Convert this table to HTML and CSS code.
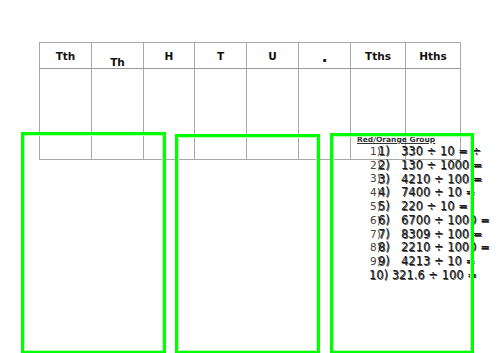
FILE: index.html
```html
<!DOCTYPE html>
<html>
<head>
<meta charset="utf-8">
<link rel="stylesheet" href="styles.css">
</head>
<body>
<table class="pv">
  <tr class="head">
    <th class="c1">Tth</th>
    <th class="c2 low">Th</th>
    <th class="c3">H</th>
    <th class="c4">T</th>
    <th class="c5">U</th>
    <th class="c6 dot">.</th>
    <th class="c7">Tths</th>
    <th class="c8">Hths</th>
  </tr>
  <tr class="body">
    <td></td><td></td><td></td><td></td><td></td><td></td><td></td><td></td>
  </tr>
</table>

<div class="notes">
  <div class="title">Red/Orange Group</div>
  <div class="row"><span class="n">1)</span><span class="m">1)</span><span class="e">330 ÷ 10 = ÷</span></div>
  <div class="row"><span class="n">2)</span><span class="m">2)</span><span class="e">130 ÷ 1000 =</span></div>
  <div class="row"><span class="n">3)</span><span class="m">3)</span><span class="e">4210 ÷ 100 =</span></div>
  <div class="row"><span class="n">4)</span><span class="m">4)</span><span class="e">7400 ÷ 10 =</span></div>
  <div class="row"><span class="n">5)</span><span class="m">5)</span><span class="e">220 ÷ 10 =</span></div>
  <div class="row"><span class="n">6)</span><span class="m">6)</span><span class="e">6700 ÷ 1000 =</span></div>
  <div class="row"><span class="n">7)</span><span class="m">7)</span><span class="e">8309 ÷ 100 =</span></div>
  <div class="row"><span class="n">8)</span><span class="m">8)</span><span class="e">2210 ÷ 1000 =</span></div>
  <div class="row"><span class="n">9)</span><span class="m">9)</span><span class="e">4213 ÷ 10 =</span></div>
  <div class="row last"><span class="e">10) 321.6 ÷ 100 =</span></div>
</div>

<div class="frames">
  <div class="frame f1"></div>
  <div class="frame f2"></div>
  <div class="frame f3"></div>
</div>
</body>
</html>
```

FILE: styles.css
```css
html, body {
  margin: 0;
  padding: 0;
  background: #ffffff;
  width: 500px;
  height: 353px;
  overflow: hidden;
  font-family: "DejaVu Sans", sans-serif;
}

body {
  position: relative;
}

.pv {
  border-collapse: collapse;
  margin: 42px 0 0 39px;
  table-layout: fixed;
  width: 421px;
}

.pv th,
.pv td {
  border: 1px solid #a8a8a8;
  padding: 0;
}

.pv .head {
  height: 26px;
}

.pv th {
  height: 24px;
  font-size: 10.5px;
  line-height: 12px;
  font-weight: bold;
  color: #111;
  text-align: center;
  vertical-align: middle;
  border-bottom-color: #9a9a9a;
  box-sizing: border-box;
}

.pv th.low {
  vertical-align: bottom;
}

.pv th.dot {
  font-size: 15px;
  line-height: 12px;
  padding-top: 3px;
}

.pv .body td {
  height: 91px;
  box-sizing: border-box;
}

.c1, .c2, .c4, .c5, .c6 { width: 52px; }
.c3 { width: 51px; }
.c7, .c8 { width: 55px; }

.notes {
  position: absolute;
  left: 357px;
  top: 135px;
  color: #1a1a1a;
}

.title {
  font-size: 7.5px;
  font-weight: bold;
  line-height: 9px;
  color: #333;
  text-decoration: underline;
  white-space: nowrap;
}

.row {
  display: flex;
  align-items: center;
  height: 13.8px;
  padding-left: 13px;
  white-space: nowrap;
}

.row.last {
  padding-left: 12px;
}

.n {
  width: 8px;
  font-size: 10.5px;
  color: #444;
  overflow: visible;
}

.m {
  width: 23px;
  font-size: 11.5px;
  color: #1a1a1a;
  text-shadow: 0.7px 0.7px 0 #555;
}

.e {
  font-size: 11.5px;
  color: #1a1a1a;
  text-shadow: 0.7px 0.7px 0 #555;
}

.frames {
  position: absolute;
  left: 21px;
  top: 132px;
  display: flex;
  align-items: flex-start;
  gap: 9px;
}

.frame {
  box-sizing: border-box;
  border: 3px solid #00ff00;
  box-shadow: inset 0 0 0 1px #b8ffb8;
}

.f1 {
  width: 145px;
  height: 222px;
}

.f2 {
  width: 145px;
  height: 220px;
  margin-top: 2px;
}

.f3 {
  width: 144px;
  height: 221px;
  margin-top: 1px;
  margin-left: 1px;
}
```
